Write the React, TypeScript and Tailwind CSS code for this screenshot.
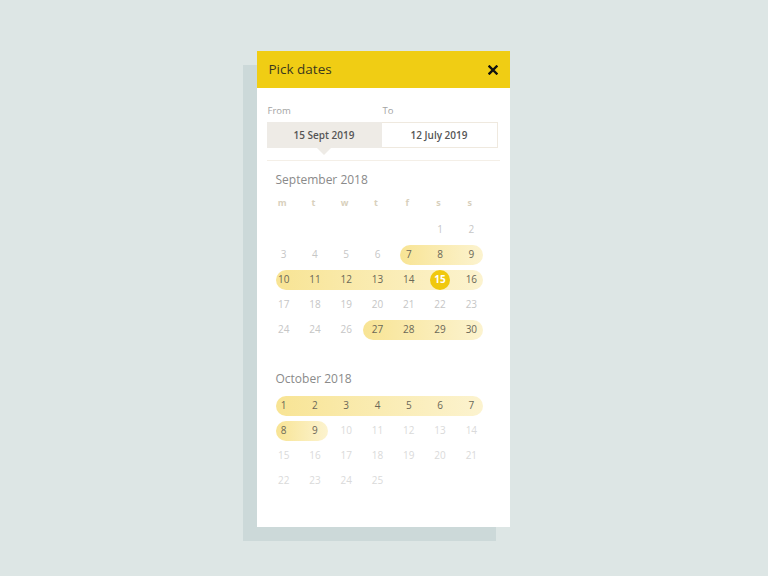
const WEEKDAYS = ["m", "t", "w", "t", "f", "s", "s"]

type Pill = { start: number; end: number }
type Row = { days: (number | null)[]; pill?: Pill }

// September 2018 starts on a Saturday
const september: Row[] = [
  { days: [null, null, null, null, null, 1, 2] },
  { days: [3, 4, 5, 6, 7, 8, 9], pill: { start: 4, end: 6 } },
  { days: [10, 11, 12, 13, 14, 15, 16], pill: { start: 0, end: 6 } },
  { days: [17, 18, 19, 20, 21, 22, 23] },
  { days: [24, 24, 26, 27, 28, 29, 30], pill: { start: 3, end: 6 } },
]

const october: Row[] = [
  { days: [1, 2, 3, 4, 5, 6, 7], pill: { start: 0, end: 6 } },
  { days: [8, 9, 10, 11, 12, 13, 14], pill: { start: 0, end: 1 } },
  { days: [15, 16, 17, 18, 19, 20, 21] },
  { days: [22, 23, 24, 25, null, null, null] },
]

const colStart = ["col-start-1", "col-start-2", "col-start-3", "col-start-4", "col-start-5", "col-start-6", "col-start-7"]
const colEnd = ["col-end-2", "col-end-3", "col-end-4", "col-end-5", "col-end-6", "col-end-7", "col-end-8"]

function MonthGrid({
  title,
  rows,
  muted,
  selected,
  weekdays,
}: {
  title: string
  rows: Row[]
  muted: string
  selected?: number
  weekdays?: boolean
}) {
  return (
    <div>
      <h3 className="pl-[9px] text-[12px] leading-[18px] text-[#8a8a8a]">{title}</h3>
      {weekdays && (
        <div className="mt-[7px] grid w-[219px] grid-cols-7 text-center text-[9px] font-bold leading-[14px] text-[#d8d0bc]">
          {WEEKDAYS.map((w, i) => (
            <span key={i}>{w}</span>
          ))}
        </div>
      )}
      <div className={weekdays ? "mt-[7px]" : "mt-[5px]"}>
        {rows.map((row, r) => (
          <div key={r} className="grid h-[25px] w-[219px] grid-cols-7 items-center">
            {row.pill && (
              <div
                className={`${colStart[row.pill.start]} ${colEnd[row.pill.end]} row-start-1 h-[20px] rounded-full bg-gradient-to-r from-[#f8e494] to-[#fcf3cf] ${
                  row.pill.start === 0 ? "ml-[9px]" : row.pill.start === 3 ? "ml-[3px]" : "ml-[8px]"
                } ${row.pill.end === 6 ? "mr-[3px]" : "mr-[1px]"}`}
              />
            )}
            {row.days.map((d, c) => {
              const inRange = row.pill && c >= row.pill.start && c <= row.pill.end
              return (
                <div
                  key={c}
                  className={`${colStart[c]} row-start-1 flex items-center justify-center pl-[3px] text-[10px]`}
                >
                  {d === null ? null : d === selected && inRange ? (
                    <span className="flex h-[20px] w-[20px] items-center justify-center rounded-full bg-[#f0c80e] font-bold text-white">
                      {d}
                    </span>
                  ) : (
                    <span className={inRange ? "text-[#6b6857]" : muted}>{d}</span>
                  )}
                </div>
              )
            })}
          </div>
        ))}
      </div>
    </div>
  )
}

export default function App() {
  return (
    <div
      className="flex min-h-screen items-center justify-center bg-[#dde6e5] pt-[2px] pr-[2px]"
      style={{ fontFamily: '"Open Sans", "Noto Sans", sans-serif' }}
    >
      <div className="flex h-[476px] w-[253px] flex-col bg-white shadow-[-14px_14px_0_0_#ccd9d9]">
        {/* Header */}
        <div className="flex h-[37px] items-center justify-between bg-[#f0cd14] pl-3 pr-[12px]">
          <h2 className="text-[13.5px] text-[#3b381e]">Pick dates</h2>
          <svg width="10" height="10" viewBox="0 0 10 10" className="mt-px">
            <path d="M1.5 1.5 8.5 8.5 M8.5 1.5 1.5 8.5" stroke="#111" strokeWidth="2.4" strokeLinecap="square" />
          </svg>
        </div>

        <div className="px-[10px] pt-[16px]">
          {/* Range inputs */}
          <div className="flex text-[9.5px] leading-[14px] text-[#a3a3a3]">
            <span className="w-[116px] pl-px">From</span>
            <span>To</span>
          </div>
          <div className="mt-[4px] flex h-[26px] w-[231px] text-[10px] font-semibold text-[#555]">
            <div className="relative flex w-[115px] items-center justify-center bg-[#eeebe6]">
              15 Sept 2019
              <div className="absolute left-[50px] top-full h-0 w-0 border-x-[7px] border-t-[7px] border-x-transparent border-t-[#eeebe6]" />
            </div>
            <div className="flex flex-1 items-center justify-center border border-l-0 border-[#efe9df]">
              12 July 2019
            </div>
          </div>
          <div className="mt-[12px] h-px w-[233px] bg-[#f4efe7]" />

          {/* Calendars */}
          <div className="mt-[10px]">
            <MonthGrid title="September 2018" rows={september} muted="text-[#c6c6c6]" selected={15} weekdays />
          </div>
          <div className="mt-[28px]">
            <MonthGrid title="October 2018" rows={october} muted="text-[#dadada]" />
          </div>
        </div>
      </div>
    </div>
  )
}
